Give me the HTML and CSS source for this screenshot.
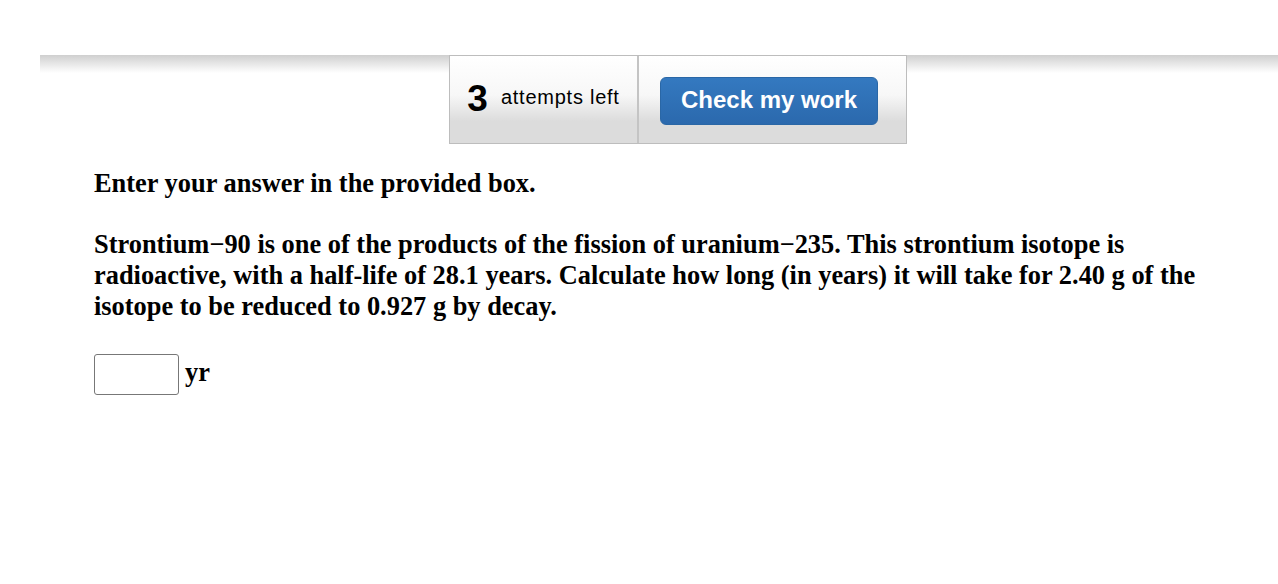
FILE: index.html
```html
<!DOCTYPE html>
<html>
<head>
<meta charset="utf-8">
<link rel="stylesheet" href="styles.css">
</head>
<body>
<div class="toolbar">
  <div class="panel">
    <div class="attempts"><span class="num">3</span><span class="label">attempts left</span></div>
    <div class="action"><button class="check">Check my work</button></div>
  </div>
</div>
<div class="content">
  <p class="instr">Enter your answer in the provided box.</p>
  <p class="question">Strontium&minus;90 is one of the products of the fission of uranium&minus;235. This strontium isotope is radioactive, with a half-life of 28.1 years. Calculate how long (in years) it will take for 2.40 g of the isotope to be reduced to 0.927 g by decay.</p>
  <div class="answer"><input class="box" type="text"><span class="unit">yr</span></div>
</div>
</body>
</html>
```
FILE: styles.css
```css
html, body { margin: 0; padding: 0; background: #fff; }
body { font-family: "Liberation Serif", "Times New Roman", serif; color: #000; }
.toolbar {
  margin-top: 55px;
  margin-left: 40px;
  height: 89px;
  background: linear-gradient(to bottom, #cfcfcf 0px, #f2f2f2 13px, #fff 18px, #fff 100%);
}
.panel {
  margin-left: 409px;
  width: 456px;
  height: 87px;
  border: 1px solid #bdbdbd;
  display: flex;
  background: linear-gradient(to bottom, #fff 0%, #f7f7f7 45%, #dcdcdc 75%, #dcdcdc 100%);
}
.attempts {
  width: 187px;
  border-right: 2px solid #c4c4c4;
  display: flex;
  align-items: center;
  justify-content: center;
  gap: 13px;
  font-family: "Liberation Sans", Arial, sans-serif;
  padding-bottom: 2px;
}
.num { font-size: 37px; font-weight: bold; }
.label { font-size: 20px; letter-spacing: 0.75px; position: relative; top: -1px; }
.action {
  flex: 1;
  display: flex;
  align-items: flex-start;
  padding-top: 21px;
  padding-left: 21px;
}
.check {
  width: 218px;
  height: 48px;
  border: 1px solid #2a67a6;
  border-radius: 6px;
  background: linear-gradient(to bottom, #3479c0, #2b69ad);
  color: #fff;
  font-family: "Liberation Sans", Arial, sans-serif;
  font-weight: bold;
  font-size: 24px;
  padding: 0 0 2px 0;
}
.content {
  padding-left: 94px;
  width: 1130px;
}
.instr {
  font-weight: bold;
  font-size: 26.4px;
  line-height: 31px;
  margin: 24px 0 0 0;
}
.question {
  font-weight: bold;
  font-size: 26.4px;
  line-height: 31px;
  margin: 30px 0 0 0;
}
.answer {
  margin-top: 32px;
  display: flex;
  align-items: center;
  gap: 6px;
}
.box {
  width: 85px;
  height: 41px;
  box-sizing: border-box;
  border: 1px solid #777;
  border-radius: 3px;
  margin: 0;
}
.unit { font-weight: bold; font-size: 26.4px; position: relative; top: -2px; }
```
